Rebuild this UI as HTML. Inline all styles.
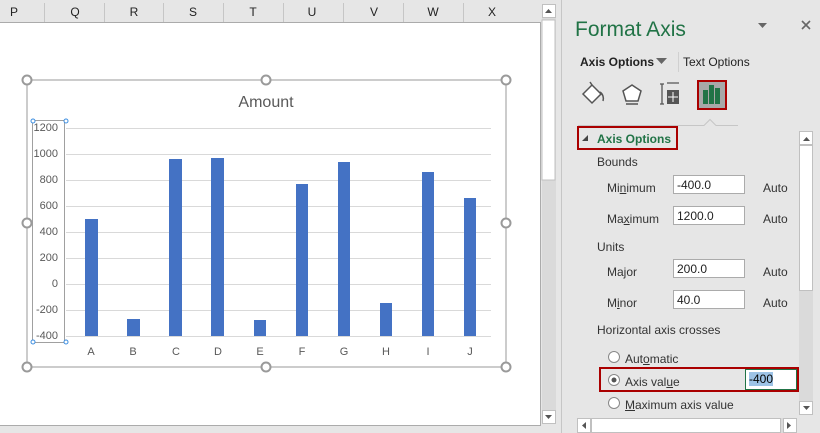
<!DOCTYPE html><html><head><style>
body{margin:0;width:820px;height:433px;overflow:hidden;background:#e6e6e6;font-family:"Liberation Sans",sans-serif;position:relative}
.a{position:absolute}
.t{font-size:12px;color:#333}
.in{position:absolute;background:#fff;border:1px solid #ababab;height:19px;font-size:12px;line-height:19px;padding-left:3px;box-sizing:border-box;width:72px;color:#222}
</style></head><body>
<svg class="a" style="left:0;top:0" width="562" height="433" font-family="Liberation Sans, sans-serif">
<rect x="0" y="0" width="562" height="433" fill="#e6e6e6"/>
<rect x="0" y="22" width="540" height="404" fill="#fff"/>
<line x1="0" y1="22.5" x2="540" y2="22.5" stroke="#ababab"/>
<line x1="540.5" y1="22" x2="540.5" y2="426" stroke="#ababab"/>
<line x1="0" y1="425.5" x2="540" y2="425.5" stroke="#ababab"/>
<g fill="#222" font-size="12" text-anchor="middle">
<text x="14" y="16">P</text><text x="75" y="16">Q</text><text x="134" y="16">R</text><text x="193" y="16">S</text><text x="253" y="16">T</text><text x="312" y="16">U</text><text x="374" y="16">V</text><text x="433" y="16">W</text><text x="492" y="16">X</text></g>
<g stroke="#c6c6c6"><line x1="44.5" y1="3" x2="44.5" y2="22"/><line x1="104.5" y1="3" x2="104.5" y2="22"/><line x1="163.5" y1="3" x2="163.5" y2="22"/><line x1="223.5" y1="3" x2="223.5" y2="22"/><line x1="283.5" y1="3" x2="283.5" y2="22"/><line x1="343.5" y1="3" x2="343.5" y2="22"/><line x1="403.5" y1="3" x2="403.5" y2="22"/><line x1="463.5" y1="3" x2="463.5" y2="22"/></g>
<rect x="542" y="4" width="14" height="420" fill="#dadada"/>
<rect x="542" y="20" width="13" height="160" fill="#fff" stroke="#c0c0c0"/>
<rect x="542.5" y="4.5" width="13" height="13" fill="#fff" stroke="#c0c0c0"/><path d="M545 13h7l-3.5-4z" fill="#555"/>
<rect x="542.5" y="410.5" width="13" height="13" fill="#fff" stroke="#c0c0c0"/><path d="M545 415h7l-3.5 4z" fill="#555"/>
<rect x="27" y="80" width="479" height="287" fill="none" stroke="#9a9a9a"/>
<text x="266" y="107" font-size="16" fill="#595959" text-anchor="middle">Amount</text>
<g stroke="#d9d9d9"><line x1="66" y1="128.5" x2="491" y2="128.5"/><line x1="66" y1="154.5" x2="491" y2="154.5"/><line x1="66" y1="180.5" x2="491" y2="180.5"/><line x1="66" y1="206.5" x2="491" y2="206.5"/><line x1="66" y1="232.5" x2="491" y2="232.5"/><line x1="66" y1="258.5" x2="491" y2="258.5"/><line x1="66" y1="284.5" x2="491" y2="284.5"/><line x1="66" y1="310.5" x2="491" y2="310.5"/><line x1="66" y1="336.5" x2="491" y2="336.5"/></g>
<g fill="#4472c4"><rect x="85" y="219" width="13" height="117"/><rect x="127" y="319" width="13" height="17"/><rect x="169" y="159" width="13" height="177"/><rect x="211" y="158" width="13" height="178"/><rect x="254" y="320" width="12" height="16"/><rect x="296" y="184" width="12" height="152"/><rect x="338" y="162" width="12" height="174"/><rect x="380" y="303" width="12" height="33"/><rect x="422" y="172" width="12" height="164"/><rect x="464" y="198" width="12" height="138"/></g>
<rect x="32.5" y="120.5" width="32" height="222" fill="none" stroke="#a0a0a0"/>
<g fill="#fff" stroke="#3b8de0"><circle cx="33" cy="121" r="2"/><circle cx="66" cy="121" r="2"/><circle cx="33" cy="342" r="2"/><circle cx="66" cy="342" r="2"/></g>
<g font-size="11" fill="#595959" text-anchor="end"><text x="58" y="131">1200</text><text x="58" y="157">1000</text><text x="58" y="183">800</text><text x="58" y="209">600</text><text x="58" y="235">400</text><text x="58" y="261">200</text><text x="58" y="287">0</text><text x="58" y="313">-200</text><text x="58" y="339">-400</text></g>
<g font-size="11" fill="#595959" text-anchor="middle"><text x="91" y="355">A</text><text x="133" y="355">B</text><text x="176" y="355">C</text><text x="218" y="355">D</text><text x="260" y="355">E</text><text x="302" y="355">F</text><text x="344" y="355">G</text><text x="386" y="355">H</text><text x="428" y="355">I</text><text x="470" y="355">J</text></g>
<g fill="#fff" stroke="#9a9a9a" stroke-width="2"><circle cx="27" cy="80" r="4.5"/><circle cx="266" cy="80" r="4.5"/><circle cx="506" cy="80" r="4.5"/><circle cx="27" cy="223" r="4.5"/><circle cx="506" cy="223" r="4.5"/><circle cx="27" cy="367" r="4.5"/><circle cx="266" cy="367" r="4.5"/><circle cx="506" cy="367" r="4.5"/></g>
<line x1="561.5" y1="0" x2="561.5" y2="433" stroke="#c6c6c6"/>
</svg>
<div class="a" style="left:575px;top:18px;font-size:21px;color:#217346">Format Axis</div>
<svg class="a" style="left:755px;top:18px" width="60" height="16"><path d="M3 5h9l-4.5 5z" fill="#666"/><path d="M47 3l8 8M55 3l-8 8" stroke="#666" stroke-width="1.6"/></svg>
<div class="a t" style="left:580px;top:55px;font-weight:bold;color:#222">Axis Options</div>
<svg class="a" style="left:656px;top:58px" width="12" height="8"><path d="M0 0h11l-5.5 6z" fill="#666"/></svg>
<div class="a" style="left:678px;top:52px;width:1px;height:20px;background:#d0d0d0"></div>
<div class="a t" style="left:683px;top:55px;color:#222">Text Options</div>
<svg class="a" style="left:578px;top:80px" width="160" height="46">
<path d="M5 14l9-9 9 9-9 9z" fill="#fff" stroke="#555" stroke-width="1.5"/><path d="M14 5l-2-3M22 12c3 2 4 6 3 9" stroke="#555" fill="none" stroke-width="1.5"/>
<path d="M54 5l9 6-3 10h-12l-3-10z" fill="#fff" stroke="#555" stroke-width="1.5"/><path d="M48 24h12" stroke="#555" stroke-width="1.5"/>
<path d="M84 4v20M82 4h4M82 24h4M89 3h12" stroke="#555" stroke-width="1.3"/><rect x="89" y="10" width="12" height="14" fill="#555"/><path d="M95 12v10M90 17h10" stroke="#fff"/>
<rect x="120" y="1" width="28" height="28" fill="#a8a8a8" stroke="#a00" stroke-width="2"/><rect x="125" y="10" width="5" height="14" fill="#217346"/><rect x="131" y="5" width="5" height="19" fill="#217346"/><rect x="137" y="8" width="5" height="16" fill="#217346"/>
<path d="M0 45.5h126l6-6 6 6h22" stroke="#c6c6c6" fill="none"/>
</svg>
<div class="a" style="left:577px;top:126px;width:101px;height:24px;border:2px solid #a00;box-sizing:border-box"></div>
<svg class="a" style="left:582px;top:134px" width="8" height="8"><path d="M6 1v6h-6z" fill="#444"/></svg>
<div class="a t" style="left:597px;top:132px;font-weight:bold;color:#217346">Axis Options</div>
<div class="a t" style="left:597px;top:155px">Bounds</div>
<div class="a t" style="left:607px;top:181px">Mi<u>n</u>imum</div><div class="in" style="left:673px;top:175px">-400.0</div><div class="a t" style="left:763px;top:181px">Auto</div>
<div class="a t" style="left:607px;top:212px">Ma<u>x</u>imum</div><div class="in" style="left:673px;top:206px">1200.0</div><div class="a t" style="left:763px;top:212px">Auto</div>
<div class="a t" style="left:597px;top:240px">Units</div>
<div class="a t" style="left:607px;top:265px">Ma<u>j</u>or</div><div class="in" style="left:673px;top:259px">200.0</div><div class="a t" style="left:763px;top:265px">Auto</div>
<div class="a t" style="left:607px;top:296px">M<u>i</u>nor</div><div class="in" style="left:673px;top:290px">40.0</div><div class="a t" style="left:763px;top:296px">Auto</div>
<div class="a t" style="left:597px;top:323px">Horizontal axis crosses</div>
<svg class="a" style="left:607px;top:350px" width="14" height="60"><circle cx="7" cy="7" r="5.5" fill="#fff" stroke="#888"/><circle cx="7" cy="30" r="5.5" fill="#fff" stroke="#888"/><circle cx="7" cy="30" r="2.5" fill="#555"/><circle cx="7" cy="53" r="5.5" fill="#fff" stroke="#888"/></svg>
<div class="a t" style="left:625px;top:352px">Aut<u>o</u>matic</div>
<div class="a" style="left:599px;top:367px;width:200px;height:25px;border:2px solid #a00;box-sizing:border-box"></div>
<div class="a t" style="left:625px;top:375px">Axis val<u>u</u>e</div>
<div class="a" style="left:745px;top:369px;width:52px;height:21px;background:#fff;border:1px solid #217346;box-sizing:border-box;font-size:12px;line-height:19px"><span style="background:#9dc3e6;margin-left:3px">-400</span></div>
<div class="a t" style="left:625px;top:398px"><u>M</u>aximum axis value</div>
<div class="a" style="left:799px;top:131px;width:14px;height:284px;background:#dadada"></div>
<div class="a" style="left:799px;top:131px;width:14px;height:14px;background:#fff;border:1px solid #c0c0c0;box-sizing:border-box"></div>
<div class="a" style="left:799px;top:145px;width:14px;height:146px;background:#fff;border:1px solid #c0c0c0;box-sizing:border-box"></div>
<div class="a" style="left:799px;top:401px;width:14px;height:14px;background:#fff;border:1px solid #c0c0c0;box-sizing:border-box"></div>
<svg class="a" style="left:802px;top:134px" width="9" height="280"><path d="M1 7h7l-3.5-4z" fill="#555"/><path d="M1 272h7l-3.5 4z" fill="#555"/></svg>
<div class="a" style="left:577px;top:418px;width:220px;height:15px;background:#dadada"></div>
<div class="a" style="left:577px;top:418px;width:14px;height:15px;background:#fff;border:1px solid #c0c0c0;box-sizing:border-box"></div>
<div class="a" style="left:591px;top:418px;width:190px;height:15px;background:#fff;border:1px solid #c0c0c0;box-sizing:border-box"></div>
<div class="a" style="left:783px;top:418px;width:14px;height:15px;background:#fff;border:1px solid #c0c0c0;box-sizing:border-box"></div>
<svg class="a" style="left:580px;top:421px" width="215" height="10"><path d="M6 1v7l-4-3.5z" fill="#555"/><path d="M207 1v7l4-3.5z" fill="#555"/></svg>
</body></html>
